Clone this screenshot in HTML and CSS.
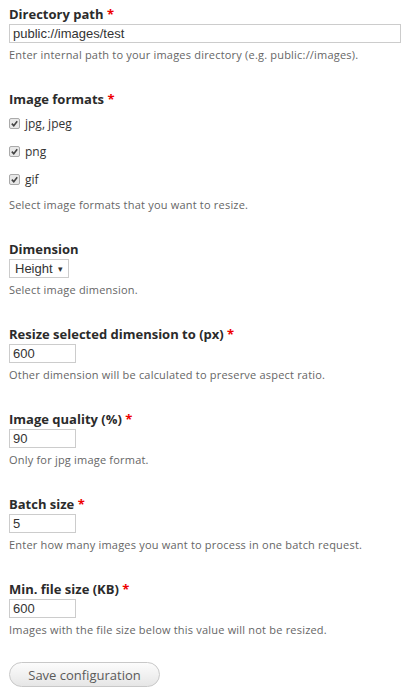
FILE: index.html
```html
<!DOCTYPE html>
<html lang="en">
<head>
	<meta charset="UTF-8">
	<meta name="viewport" content="width=device-width, initial-scale=1.0">
	<title>Image resize configuration</title>
	<link rel="stylesheet" href="styles.css">
</head>
<body>
	<form class="config-form">
		<div class="form-item">
			<label>Directory path <span class="required">*</span></label>
			<input class="text wide" type="text" value="public://images/test">
			<div class="description">Enter internal path to your images directory (e.g. public://images).</div>
		</div>

		<div class="form-item">
			<label>Image formats <span class="required">*</span></label>
			<div class="checkboxes">
				<div class="check-row"><span class="checkbox"><svg viewBox="0 0 10 10"><path d="M2 5.2 L4.2 7.4 L8 2.6" fill="none" stroke="#444" stroke-width="1.8"/></svg></span>jpg, jpeg</div>
				<div class="check-row"><span class="checkbox"><svg viewBox="0 0 10 10"><path d="M2 5.2 L4.2 7.4 L8 2.6" fill="none" stroke="#444" stroke-width="1.8"/></svg></span>png</div>
				<div class="check-row"><span class="checkbox"><svg viewBox="0 0 10 10"><path d="M2 5.2 L4.2 7.4 L8 2.6" fill="none" stroke="#444" stroke-width="1.8"/></svg></span>gif</div>
			</div>
			<div class="description">Select image formats that you want to resize.</div>
		</div>

		<div class="form-item">
			<label>Dimension</label>
			<div class="select">Height <span class="arrow">&#9662;</span></div>
			<div class="description">Select image dimension.</div>
		</div>

		<div class="form-item">
			<label>Resize selected dimension to (px) <span class="required">*</span></label>
			<input class="text short" type="text" value="600">
			<div class="description">Other dimension will be calculated to preserve aspect ratio.</div>
		</div>

		<div class="form-item">
			<label>Image quality (%) <span class="required">*</span></label>
			<input class="text short" type="text" value="90">
			<div class="description">Only for jpg image format.</div>
		</div>

		<div class="form-item">
			<label>Batch size <span class="required">*</span></label>
			<input class="text short" type="text" value="5">
			<div class="description">Enter how many images you want to process in one batch request.</div>
		</div>

		<div class="form-item last">
			<label>Min. file size (KB) <span class="required">*</span></label>
			<input class="text short" type="text" value="600">
			<div class="description">Images with the file size below this value will not be resized.</div>
		</div>

		<button class="button" type="button">Save configuration</button>
	</form>
</body>
</html>
```

FILE: styles.css
```css
body{
	margin: 0;
	padding: 6px 9px 0 9px;
	background: #fff;
	font-family: "Open Sans", "DejaVu Sans", sans-serif;
	color: #333;
}

.form-item{
	margin-bottom: 28px;
}

.form-item.last{
	margin-bottom: 24px;
}

.form-item label{
	display: block;
	font-size: 13px;
	font-weight: bold;
	line-height: 17px;
	color: #2b2b2b;
	margin-bottom: 1px;
}

.required{
	color: #e00;
}

.text{
	display: block;
	box-sizing: border-box;
	height: 19px;
	margin: 0;
	padding: 0 3px;
	border: 1px solid #ccc;
	font-family: "Liberation Sans", Arial, sans-serif;
	font-size: 13px;
	color: #333;
}

.wide{
	width: 392px;
}

.short{
	width: 67px;
}

.description{
	margin-top: 4px;
	font-size: 11px;
	letter-spacing: 0.2px;
	line-height: 16px;
	color: #666;
}

.checkboxes{
	margin-top: 1px;
}

.check-row{
	display: flex;
	align-items: center;
	height: 28px;
	font-size: 12px;
	color: #333;
}

.checkbox{
	display: inline-flex;
	width: 9px;
	height: 9px;
	margin-right: 5px;
	border: 1px solid #aaa;
	border-radius: 2px;
	background: #e8e8e8;
}

.checkbox svg{
	width: 9px;
	height: 9px;
}

.select{
	display: flex;
	align-items: center;
	box-sizing: border-box;
	width: 60px;
	height: 19px;
	padding: 0 5px;
	border: 1px solid #ccc;
	font-family: "Liberation Sans", Arial, sans-serif;
	font-size: 13px;
	color: #333;
}

.select .arrow{
	margin-left: auto;
	font-size: 9px;
}

.button{
	display: block;
	width: 151px;
	height: 25px;
	padding: 0;
	border: 1px solid #c8c8c8;
	border-radius: 13px;
	background: linear-gradient(#fcfcfc, #e6e6e6);
	font-family: "Open Sans", "DejaVu Sans", sans-serif;
	font-size: 13px;
	color: #5a5a5a;
}
```
